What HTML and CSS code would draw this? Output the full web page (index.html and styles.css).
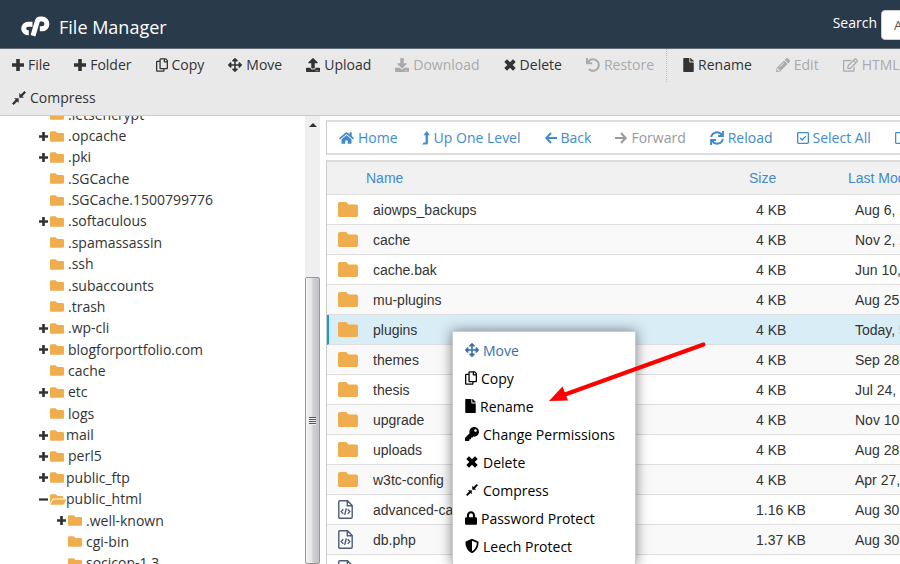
FILE: index.html
```html
<!DOCTYPE html>
<html lang="en">
<head>
    <meta charset="UTF-8">
    <meta name="viewport" content="width=device-width, initial-scale=1.0">
    <title>File Manager</title>
    <link rel="stylesheet" href="styles.css">
</head>
<body>
    <!-- Icon sprite -->
    <svg class="sprite" aria-hidden="true">
        <symbol id="plus" viewBox="0 0 12 12"><path d="M4.200 0h3.600v4.200H12v3.600H7.800V12H4.200V7.800H0V4.200h4.200z"/></symbol>
        <symbol id="minus" viewBox="0 0 12 12"><path d="M0 4.500h12v3H0z"/></symbol>
        <symbol id="copy" viewBox="0 0 448 512"><path d="M433.941 65.941l-51.882-51.882A48 48 0 0 0 348.118 0H176c-26.510 0-48 21.490-48 48v48H48c-26.510 0-48 21.490-48 48v320c0 26.510 21.490 48 48 48h224c26.510 0 48-21.490 48-48v-48h80c26.510 0 48-21.490 48-48V99.882a48 48 0 0 0-14.059-33.941zM266 464H54a6 6 0 0 1-6-6V150a6 6 0 0 1 6-6h74v224c0 26.510 21.490 48 48 48h96v42a6 6 0 0 1-6 6zm128-96H182a6 6 0 0 1-6-6V54a6 6 0 0 1 6-6h106v88c0 13.255 10.745 24 24 24h88v202a6 6 0 0 1-6 6zm6-256h-64V48h9.632c1.591 0 3.117.632 4.243 1.757l48.368 48.368a6 6 0 0 1 1.757 4.243V112z"/></symbol>
        <symbol id="move" viewBox="0 0 512 512"><path d="M352.201 425.775l-79.196 79.196c-9.373 9.373-24.568 9.373-33.941 0l-79.196-79.196c-15.119-15.119-4.411-40.971 16.971-40.970h51.162L228 284H127.196v51.162c0 21.382-25.851 32.090-40.971 16.971L7.029 272.937c-9.373-9.373-9.373-24.569 0-33.941L86.225 159.800c15.119-15.119 40.971-4.411 40.971 16.971V228H228V127.196h-51.230c-21.382 0-32.090-25.851-16.971-40.971l79.196-79.196c9.373-9.373 24.568-9.373 33.941 0l79.196 79.196c15.119 15.119 4.411 40.971-16.971 40.971h-51.162V228h100.804v-51.162c0-21.382 25.851-32.090 40.970-16.971l79.196 79.196c9.373 9.373 9.373 24.569 0 33.941L425.773 352.200c-15.119 15.119-40.971 4.411-40.970-16.971V284H284v100.804h51.230c21.382 0 32.090 25.851 16.971 40.971z"/></symbol>
        <symbol id="upload" viewBox="0 0 512 512"><path d="M296 384h-80c-13.300 0-24-10.700-24-24V192h-87.700c-17.800 0-26.700-21.500-14.100-34.100L242.300 5.700c7.500-7.500 19.800-7.500 27.300 0l152.200 152.200c12.600 12.600 3.700 34.100-14.100 34.100H320v168c0 13.300-10.700 24-24 24zm216-8v112c0 13.300-10.700 24-24 24H24c-13.300 0-24-10.700-24-24V376c0-13.300 10.700-24 24-24h136v8c0 30.900 25.100 56 56 56h80c30.900 0 56-25.100 56-56v-8h136c13.300 0 24 10.700 24 24zm-124 88c0-11-9-20-20-20s-20 9-20 20 9 20 20 20 20-9 20-20zm64 0c0-11-9-20-20-20s-20 9-20 20 9 20 20 20 20-9 20-20z"/></symbol>
        <symbol id="download" viewBox="0 0 512 512"><path d="M216 0h80c13.300 0 24 10.700 24 24v168h87.700c17.800 0 26.700 21.500 14.100 34.100L269.700 378.300c-7.500 7.500-19.800 7.500-27.300 0L90.100 226.100c-12.600-12.600-3.700-34.100 14.100-34.100H192V24c0-13.300 10.700-24 24-24zm296 376v112c0 13.300-10.700 24-24 24H24c-13.300 0-24-10.700-24-24V376c0-13.300 10.700-24 24-24h146.700l49 49c20.100 20.100 52.500 20.100 72.600 0l49-49H488c13.300 0 24 10.700 24 24zm-124 88c0-11-9-20-20-20s-20 9-20 20 9 20 20 20 20-9 20-20zm64 0c0-11-9-20-20-20s-20 9-20 20 9 20 20 20 20-9 20-20z"/></symbol>
        <symbol id="times" viewBox="0 0 12 12"><path d="M3 .3L6 3.300 9 .3 11.700 3 8.700 6l3 3L9 11.700l-3-3-3 3L.3 9l3-3-3-3z"/></symbol>
        <symbol id="undo" viewBox="0 0 512 512"><path d="M212.333 224.333H12c-6.627 0-12-5.373-12-12V12C0 5.373 5.373 0 12 0h48c6.627 0 12 5.373 12 12v78.112C117.773 39.279 184.260 7.470 258.175 8.007c136.906.994 246.448 111.623 246.157 248.532C504.041 393.258 393.120 504 256.333 504c-64.089 0-122.496-24.313-166.510-64.215-5.099-4.622-5.334-12.554-.467-17.420l33.967-33.967c4.474-4.474 11.662-4.717 16.401-.525C170.760 415.336 211.580 432 256.333 432c97.268 0 176-78.716 176-176 0-97.267-78.716-176-176-176-58.496 0-110.280 28.476-142.274 72.333h98.274c6.627 0 12 5.373 12 12v48c0 6.627-5.373 12-12 12z"/></symbol>
        <symbol id="file" viewBox="0 0 384 512"><path d="M224 136V0H24C10.700 0 0 10.700 0 24v464c0 13.300 10.700 24 24 24h336c13.300 0 24-10.700 24-24V160H248c-13.200 0-24-10.800-24-24zm160-14.100v6.100H256V0h6.100c6.400 0 12.500 2.500 17 7l97.900 98c4.500 4.500 7 10.600 7 16.900z"/></symbol>
        <symbol id="pencil" viewBox="0 0 512 512"><path d="M497.900 142.100l-46.100 46.100c-4.700 4.700-12.300 4.700-17 0l-111-111c-4.700-4.700-4.700-12.300 0-17l46.100-46.100c18.700-18.700 49.100-18.700 67.900 0l60.100 60.100c18.800 18.700 18.800 49.100 0 67.900zM284.200 99.800L21.600 362.400.4 483.900c-2.900 16.400 11.400 30.600 27.800 27.800l121.500-21.300 262.600-262.600c4.700-4.700 4.700-12.300 0-17l-111-111c-4.800-4.700-12.400-4.700-17.100 0zM124.100 339.900c-5.500-5.500-5.500-14.300 0-19.800l154-154c5.500-5.500 14.300-5.500 19.800 0s5.500 14.300 0 19.800l-154 154c-5.500 5.500-14.300 5.500-19.800 0zM88 424h48v36.300l-64.500 11.300-31.100-31.100L51.700 376H88v48z"/></symbol>
        <symbol id="edit" viewBox="0 0 576 512"><path d="M402.300 344.900l32-32c5-5 13.700-1.500 13.700 5.700V464c0 26.500-21.500 48-48 48H48c-26.500 0-48-21.500-48-48V112c0-26.500 21.500-48 48-48h273.500c7.100 0 10.700 8.600 5.700 13.700l-32 32c-1.500 1.500-3.500 2.300-5.700 2.300H48v352h352V350.500c0-2.100.8-4.100 2.300-5.600zm156.600-201.800L296.300 405.700l-90.400 10c-26.200 2.900-48.500-19.200-45.600-45.600l10-90.400L432.900 17.100c22.900-22.900 59.900-22.900 82.700 0l43.200 43.200c22.900 22.900 22.900 60 .1 82.800zM460.100 174L402 115.900 216.200 301.800l-7.300 65.300 65.300-7.300L460.100 174zm64.800-79.700l-43.200-43.200c-4.100-4.100-10.800-4.100-14.800 0L436 82l58.100 58.100 30.900-30.900c4-4.200 4-10.800-.1-14.900z"/></symbol>
        <symbol id="compress" viewBox="0 0 14 14"><path d="M7.300 6.700V2.100l1.500 1.500L12.400 0 14 1.600l-3.600 3.600 1.500 1.500zM6.700 7.300H2.100l1.500 1.500L0 12.400 1.600 14l3.600-3.600 1.500 1.500z"/></symbol>
        <symbol id="folder" viewBox="0 64 512 384"><path d="M464 128H272l-64-64H48C21.490 64 0 85.490 0 112v288c0 26.510 21.490 48 48 48h416c26.510 0 48-21.490 48-48V176c0-26.510-21.490-48-48-48z"/></symbol>
        <symbol id="folder-open" viewBox="0 64 576 384"><path d="M572.694 292.093L500.270 416.248A63.997 63.997 0 0 1 444.989 448H45.025c-18.523 0-30.064-20.093-20.731-36.093l72.424-124.155A64 64 0 0 1 152 256h399.964c18.523 0 30.064 20.093 20.730 36.093zM152 224h328v-48c0-26.510-21.490-48-48-48H272l-64-64H48C21.490 64 0 85.490 0 112v278.046l69.077-118.418C86.214 242.250 117.989 224 152 224z"/></symbol>
        <symbol id="home" viewBox="0 32 576 448"><path d="M280.370 148.260L96 300.110V464a16 16 0 0 0 16 16l112.060-.29a16 16 0 0 0 15.920-16V368a16 16 0 0 1 16-16h64a16 16 0 0 1 16 16v95.640a16 16 0 0 0 16 16.050L464 480a16 16 0 0 0 16-16V300L295.670 148.260a12.190 12.190 0 0 0-15.300 0zM571.600 251.470L488 182.560V44.050a12 12 0 0 0-12-12h-56a12 12 0 0 0-12 12v72.610L318.470 43a48 48 0 0 0-61 0L4.340 251.470a12 12 0 0 0-1.600 16.900l25.500 31A12 12 0 0 0 45.150 301l235.220-193.740a12.190 12.190 0 0 1 15.300 0L530.900 301a12 12 0 0 0 16.900-1.600l25.500-31a12 12 0 0 0-1.700-16.930z"/></symbol>
        <symbol id="level-up" viewBox="0 0 8 14"><path d="M4.700 0L8 4.200H5.900V12q0 1.600-1.600 1.600H.2l1.500-2h1.900V4.200H1.400z"/></symbol>
        <symbol id="arrow-left" viewBox="0 0 12 12"><path class="line" d="M12 6H1.500M6 1L1.300 6 6 11"/></symbol>
        <symbol id="arrow-right" viewBox="0 0 12 12"><path class="line" d="M0 6h10.500M6 1l4.700 5L6 11"/></symbol>
        <symbol id="reload" viewBox="0 0 14 14"><path class="line" d="M1.200 6.200A5.800 5.800 0 0 1 12 4.400M12.900 0v5H8M12.800 7.800A5.800 5.800 0 0 1 2 9.600M1.100 14V9H6"/></symbol>
        <symbol id="check-square" viewBox="0 0 13 13"><path class="thin" d="M1.500.7h10q.8 0 .8.8v10q0 .8-.8.8h-10q-.8 0-.8-.8v-10q0-.8.8-.8zM3.400 6.500l2.200 2.200 4-4.200"/></symbol>
        <symbol id="square" viewBox="0 0 13 13"><path class="thin" d="M1.500.7h10q.8 0 .8.8v10q0 .8-.8.8h-10q-.8 0-.8-.8v-10q0-.8.8-.8z"/></symbol>
        <symbol id="key" viewBox="0 0 512 512"><path d="M512 176.001C512 273.203 433.202 352 336 352c-11.220 0-22.190-1.062-32.827-3.069l-24.012 27.014A23.999 23.999 0 0 1 261.223 384H224v40c0 13.255-10.745 24-24 24h-40v40c0 13.255-10.745 24-24 24H24c-13.255 0-24-10.745-24-24v-78.059c0-6.365 2.529-12.470 7.029-16.971l161.802-161.802C163.108 213.814 160 195.271 160 176 160 78.798 238.797.001 335.999 0 433.488-.001 512 78.511 512 176.001zM336 128c0 26.510 21.490 48 48 48s48-21.490 48-48-21.490-48-48-48-48 21.490-48 48z"/></symbol>
        <symbol id="lock" viewBox="0 0 448 512"><path d="M400 224h-24v-72C376 68.200 307.800 0 224 0S72 68.200 72 152v72H48c-26.500 0-48 21.500-48 48v192c0 26.500 21.500 48 48 48h352c26.500 0 48-21.500 48-48V272c0-26.500-21.500-48-48-48zm-104 0H152v-72c0-39.700 32.300-72 72-72s72 32.300 72 72v72z"/></symbol>
        <symbol id="shield" viewBox="0 0 512 512"><path d="M466.500 83.700l-192-80a48.150 48.150 0 0 0-36.900 0l-192 80C27.700 91.100 16 108.600 16 128c0 198.500 114.500 335.700 221.500 380.300 11.800 4.900 25.100 4.900 36.900 0C360.100 472.600 496 349.300 496 128c0-19.400-11.700-36.900-29.500-44.300zM256.100 446.300l-.1-381 175.900 73.300c-3.300 151.400-82.100 261.100-175.800 307.700z"/></symbol>
        <symbol id="file-code" viewBox="0 0 15 19"><path class="code" d="M2 .8h7.500l4.700 4.700V17q0 1.200-1.200 1.200H2Q.8 18.200.8 17V2Q.8.8 2 .8zM9.300 1v4.800H14M5.300 9.300L3.200 11.600l2.100 2.300M9.700 9.300l2.100 2.300-2.100 2.300M8.300 8.300l-1.600 6.500"/></symbol>
    </svg>

    <header class="top-bar">
        <svg class="logo" viewBox="0 0 30 22" aria-hidden="true">
            <path d="M12.500 8.200H8a4.300 4.300 0 0 0 0 8.600h.8M13 19.800l4.200-14.200q.7-2.600 3.200-2.600H22a4.900 4.900 0 0 1 0 9.800h-2.200"/>
        </svg>
        <h1>File Manager</h1>
        <div class="search">
            <label for="scope">Search</label>
            <select id="scope">
                <option>All Your Files</option>
            </select>
        </div>
    </header>

    <nav class="toolbar">
        <div class="tool-row">
            <button><svg class="i12"><use href="#plus"/></svg>File</button>
            <button><svg class="i12"><use href="#plus"/></svg>Folder</button>
            <button><svg class="i12"><use href="#copy"/></svg>Copy</button>
            <button><svg class="i14"><use href="#move"/></svg>Move</button>
            <button><svg class="i14"><use href="#upload"/></svg>Upload</button>
            <button disabled><svg class="i14"><use href="#download"/></svg>Download</button>
            <button><svg class="i12"><use href="#times"/></svg>Delete</button>
            <button disabled><svg class="i14"><use href="#undo"/></svg>Restore</button>
            <span class="divider"></span>
            <button><svg class="i11"><use href="#file"/></svg>Rename</button>
            <button disabled><svg class="i14"><use href="#pencil"/></svg>Edit</button>
            <button disabled><svg class="i15"><use href="#edit"/></svg>HTML Editor</button>
        </div>
        <div class="tool-row">
            <button><svg class="i14"><use href="#compress"/></svg>Compress</button>
        </div>
    </nav>

    <main class="workspace">
        <aside class="tree-pane">
            <ul class="tree">
                <li><i></i><svg class="dir"><use href="#folder"/></svg>.letsencrypt</li>
                <li><svg class="twist"><use href="#plus"/></svg><svg class="dir"><use href="#folder"/></svg>.opcache</li>
                <li><svg class="twist"><use href="#plus"/></svg><svg class="dir"><use href="#folder"/></svg>.pki</li>
                <li><i></i><svg class="dir"><use href="#folder"/></svg>.SGCache</li>
                <li><i></i><svg class="dir"><use href="#folder"/></svg>.SGCache.1500799776</li>
                <li><svg class="twist"><use href="#plus"/></svg><svg class="dir"><use href="#folder"/></svg>.softaculous</li>
                <li><i></i><svg class="dir"><use href="#folder"/></svg>.spamassassin</li>
                <li><i></i><svg class="dir"><use href="#folder"/></svg>.ssh</li>
                <li><i></i><svg class="dir"><use href="#folder"/></svg>.subaccounts</li>
                <li><i></i><svg class="dir"><use href="#folder"/></svg>.trash</li>
                <li><svg class="twist"><use href="#plus"/></svg><svg class="dir"><use href="#folder"/></svg>.wp-cli</li>
                <li><svg class="twist"><use href="#plus"/></svg><svg class="dir"><use href="#folder"/></svg>blogforportfolio.com</li>
                <li><i></i><svg class="dir"><use href="#folder"/></svg>cache</li>
                <li><svg class="twist"><use href="#plus"/></svg><svg class="dir"><use href="#folder"/></svg>etc</li>
                <li><i></i><svg class="dir"><use href="#folder"/></svg>logs</li>
                <li class="special"><svg class="twist"><use href="#plus"/></svg><svg class="dir"><use href="#folder"/></svg>mail</li>
                <li><svg class="twist"><use href="#plus"/></svg><svg class="dir"><use href="#folder"/></svg>perl5</li>
                <li class="special"><svg class="twist"><use href="#plus"/></svg><svg class="dir"><use href="#folder"/></svg>public_ftp</li>
                <li class="open"><svg class="twist"><use href="#minus"/></svg><svg class="dir"><use href="#folder-open"/></svg>public_html</li>
                <li class="child"><svg class="twist"><use href="#plus"/></svg><svg class="dir"><use href="#folder"/></svg>.well-known</li>
                <li class="child"><i></i><svg class="dir"><use href="#folder"/></svg>cgi-bin</li>
                <li class="child"><i></i><svg class="dir"><use href="#folder"/></svg>socicon-1.3</li>
            </ul>
        </aside>
        <div class="scrollbar">
            <span class="scroll-up"></span>
            <div class="thumb"><span class="grip"></span></div>
        </div>

        <section class="file-pane">
            <div class="actions">
                <button><svg class="i15"><use href="#home"/></svg>Home</button>
                <button><svg class="i8"><use href="#level-up"/></svg>Up One Level</button>
                <button><svg class="i12"><use href="#arrow-left"/></svg>Back</button>
                <button disabled><svg class="i12"><use href="#arrow-right"/></svg>Forward</button>
                <button><svg class="i14"><use href="#reload"/></svg>Reload</button>
                <button><svg class="i12"><use href="#check-square"/></svg>Select All</button>
                <button><svg class="i12"><use href="#square"/></svg>Unselect All</button>
            </div>

            <table class="listing">
                <colgroup>
                    <col class="col-icon"><col><col class="col-size"><col class="col-date">
                </colgroup>
                <thead>
                    <tr><th></th><th>Name</th><th>Size</th><th>Last Modified</th></tr>
                </thead>
                <tbody>
                    <tr><td><svg><use href="#folder"/></svg></td><td>aiowps_backups</td><td>4 KB</td><td>Aug 6, 2017</td></tr>
                    <tr><td><svg><use href="#folder"/></svg></td><td>cache</td><td>4 KB</td><td>Nov 2, 2017</td></tr>
                    <tr><td><svg><use href="#folder"/></svg></td><td>cache.bak</td><td>4 KB</td><td>Jun 10, 2017</td></tr>
                    <tr><td><svg><use href="#folder"/></svg></td><td>mu-plugins</td><td>4 KB</td><td>Aug 25, 2017</td></tr>
                    <tr class="selected"><td><svg><use href="#folder"/></svg></td><td>plugins</td><td>4 KB</td><td>Today, 5:12 PM</td></tr>
                    <tr><td><svg><use href="#folder"/></svg></td><td>themes</td><td>4 KB</td><td>Sep 28, 2017</td></tr>
                    <tr><td><svg><use href="#folder"/></svg></td><td>thesis</td><td>4 KB</td><td>Jul 24, 2017</td></tr>
                    <tr><td><svg><use href="#folder"/></svg></td><td>upgrade</td><td>4 KB</td><td>Nov 10, 2017</td></tr>
                    <tr><td><svg><use href="#folder"/></svg></td><td>uploads</td><td>4 KB</td><td>Aug 28, 2017</td></tr>
                    <tr><td><svg><use href="#folder"/></svg></td><td>w3tc-config</td><td>4 KB</td><td>Apr 27, 2017</td></tr>
                    <tr><td><svg class="doc"><use href="#file-code"/></svg></td><td>advanced-ca</td><td>1.16 KB</td><td>Aug 30, 2017</td></tr>
                    <tr><td><svg class="doc"><use href="#file-code"/></svg></td><td>db.php</td><td>1.37 KB</td><td>Aug 30, 2017</td></tr>
                    <tr><td><svg class="doc"><use href="#file-code"/></svg></td><td></td><td></td><td></td></tr>
                </tbody>
            </table>

            <!-- Right-click menu -->
            <div class="context-menu">
                <button class="hover"><svg class="i14"><use href="#move"/></svg>Move</button>
                <button><svg class="i12"><use href="#copy"/></svg>Copy</button>
                <button><svg class="i11"><use href="#file"/></svg>Rename</button>
                <button><svg class="i14"><use href="#key"/></svg>Change Permissions</button>
                <button><svg class="i14 small"><use href="#times"/></svg>Delete</button>
                <button><svg class="i14 small"><use href="#compress"/></svg>Compress</button>
                <button><svg class="i12"><use href="#lock"/></svg>Password Protect</button>
                <button><svg class="i14"><use href="#shield"/></svg>Leech Protect</button>
            </div>

            <svg class="pointer" viewBox="0 0 160 66" aria-hidden="true">
                <path d="M154.500 4.500L16 54.500" stroke="#f00" stroke-width="4" stroke-linecap="round"/>
                <path d="M0 61L13.500 46.500 19 60.500z" fill="#f00"/>
            </svg>
        </section>
    </main>
</body>
</html>
```
FILE: styles.css
```css
* {
    box-sizing: border-box;
}

body {
    margin: 0;
    height: 100vh;
    display: flex;
    flex-direction: column;
    overflow: hidden;
    background-color: #fff;
    color: #333;
    font-family: "Open Sans", sans-serif;
    font-size: 14px;
}

svg {
    fill: currentColor;
    flex: none;
}

.sprite {
    position: absolute;
    width: 0;
    height: 0;
}

.line {
    fill: none;
    stroke: currentColor;
    stroke-width: 2;
}

.thin,
.code {
    fill: none;
    stroke: currentColor;
    stroke-width: 1.4;
}

button {
    display: flex;
    align-items: center;
    gap: 4px;
    padding: 0;
    border: none;
    background: none;
    color: inherit;
    font: inherit;
    white-space: nowrap;
    cursor: pointer;
}

/* Icon widths */
.i8 { width: 8px; height: 14px; }
.i11 { width: 11px; height: 14px; }
.i12 { width: 12px; height: 14px; }
.i14 { width: 14px; height: 14px; }
.i15 { width: 15px; height: 14px; }
.small { height: 12px; }

/* Header */
.top-bar {
    flex: none;
    display: flex;
    align-items: center;
    height: 49px;
    padding: 6px 0 0 20px;
    background-color: #293a4a;
    border-bottom: 1px solid #5f6c78;
    color: #fff;
    overflow: hidden;
}

.logo {
    width: 30px;
    height: 22px;
    fill: none;
    stroke: #fff;
    stroke-width: 5;
}

.top-bar h1 {
    margin: 0 0 0 9px;
    font-size: 18px;
    font-weight: 400;
}

.search {
    display: flex;
    gap: 4px;
    margin: 0 -101px 4px auto;
    line-height: 26px;
}

.search select {
    width: 120px;
    height: 30px;
    padding: 0 12px;
    border: 1px solid #ccc;
    border-radius: 4px;
    background-color: #fff;
    color: #555;
    font: inherit;
    font-size: 13px;
    appearance: none;
}

/* Toolbar */
.toolbar {
    flex: none;
    background-color: #e9e9e9;
    border-bottom: 1px solid #c8ccd0;
    overflow: hidden;
}

.tool-row {
    display: flex;
    height: 33px;
}

.tool-row button {
    padding: 0 12px 2px;
}

.tool-row button:disabled {
    color: #aaa;
}

.divider {
    border-left: 1px dotted #bbb;
    margin-right: 4px;
}

/* Directory tree */
.workspace {
    flex: 1;
    min-height: 0;
    display: flex;
}

.tree-pane {
    flex: none;
    width: 305px;
    display: flex;
    overflow: hidden;
}

.tree {
    display: flex;
    flex-direction: column;
    list-style: none;
    margin: -12px 0 -10px;
    padding: 0 0 0 39px;
}

.tree li {
    flex: 1;
    min-height: 0;
    display: flex;
    align-items: center;
    line-height: 20px;
    white-space: nowrap;
}

.tree .child {
    padding-left: 18px;
}

.tree .twist,
.tree i {
    width: 9px;
    height: 9px;
    margin-right: 2px;
}

.tree .dir {
    width: 14px;
    height: 11px;
    margin-right: 4px;
    color: #f0ad4e;
}

.tree .special .dir {
    margin-right: 2px;
}

.tree .open .dir {
    width: 16px;
    margin-right: 0;
}

.scrollbar {
    flex: none;
    width: 15px;
    display: flex;
    flex-direction: column;
    align-items: center;
    background-color: #efefef;
}

.scroll-up {
    margin-top: 7px;
    border: 4px solid transparent;
    border-top: none;
    border-bottom: 4px solid #333;
}

.thumb {
    width: 100%;
    height: 64%;
    margin-top: auto;
    display: flex;
    align-items: center;
    justify-content: center;
    border: 1px solid #979797;
    border-radius: 2px;
    background: linear-gradient(to right, #f4f4f4, #e4e4e4 45%, #cfcfd3 55%, #c4c4c8);
}

.grip {
    width: 7px;
    height: 8px;
    background: repeating-linear-gradient(to bottom, #555 0, #555 1px, #eee 1px, #eee 2px);
}

/* File list */
.file-pane {
    position: relative;
    flex: 1;
    min-width: 0;
    margin-left: 6px;
    padding-top: 4px;
    overflow: hidden;
}

.actions {
    display: flex;
    width: calc(100% + 200px);
    height: 35px;
    margin-bottom: 5px;
    border: 2px solid #ddd;
    border-left: 1px solid #ccc;
    color: #428bca;
}

.actions button {
    padding: 0 12px;
}

.actions button:disabled {
    color: #999;
}

.listing {
    width: calc(100% + 68px);
    table-layout: fixed;
    border-collapse: separate;
    border-spacing: 0;
    border: 2px solid #ddd;
    border-left: 1px solid #ccc;
    font-family: "Liberation Sans", sans-serif;
    font-size: 14px;
}

.col-icon { width: 39px; }
.col-size { width: 99px; }
.col-date { width: 118px; }

.listing th {
    height: 33px;
    padding: 0;
    background-color: #f1f1f1;
    border-bottom: 1px solid #ddd;
    color: #428bca;
    font-weight: 400;
    text-align: left;
}

.listing td {
    height: 30px;
    padding: 0 0 0 7px;
    border-bottom: 1px solid #ddd;
    white-space: nowrap;
}

.listing td:first-child {
    padding-left: 11px;
}

.listing tr:nth-child(even) td {
    background-color: #f9f9f9;
}

.listing svg {
    display: block;
    width: 20px;
    height: 15px;
    color: #f0ad4e;
}

.listing .doc {
    width: 15px;
    height: 19px;
    color: #4b5b7c;
}

.listing .selected td {
    background-color: #d9edf7;
}

.listing .selected td:first-child {
    padding-left: 9px;
    border-left: 2px solid #179bd7;
}

/* Context menu */
.context-menu {
    position: absolute;
    top: 215px;
    left: 126px;
    width: 184px;
    padding: 4px 0;
    background-color: #fff;
    border: 1px solid #ccc;
    box-shadow: 0 0 12px rgba(0, 0, 0, 0.5);
    color: #000;
}

.context-menu button {
    width: 100%;
    height: 28px;
    padding: 0 12px;
}

.context-menu .hover {
    color: #3a6ea5;
}

.pointer {
    position: absolute;
    top: 224px;
    left: 223px;
    width: 160px;
    height: 66px;
}
```
